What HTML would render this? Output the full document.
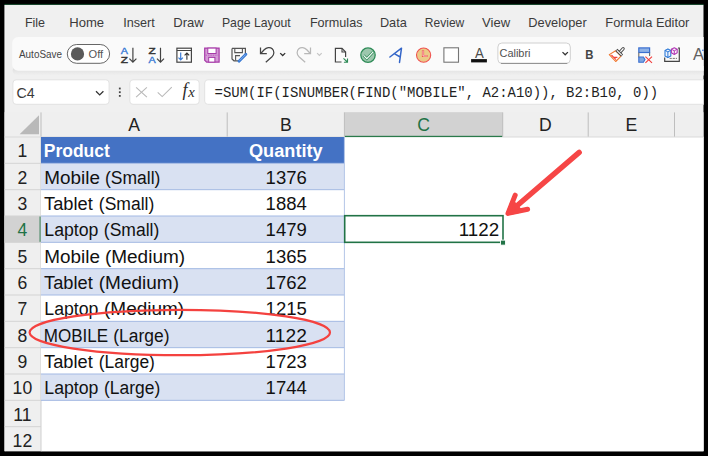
<!DOCTYPE html>
<html lang="en"><head><meta charset="utf-8"><title>Excel SUMIF case-sensitive</title>
<style>html,body{margin:0;padding:0;background:#000;overflow:hidden}svg{display:block}</style></head>
<body>
<svg width="708" height="456" viewBox="0 0 708 456" font-family="'Liberation Sans', sans-serif">
<rect width="708" height="456" fill="#000"/>
<rect x="4.4" y="3.9" width="699.3000000000001" height="1.2" fill="#0c3d22"/>
<clipPath id="c"><rect x="4.4" y="4.8" width="699.3000000000001" height="446.59999999999997"/></clipPath>
<g clip-path="url(#c)">
<rect x="4.4" y="4.8" width="699.3000000000001" height="446.59999999999997" fill="#f0f0f0"/>
<rect x="4.4" y="4.8" width="1" height="446.59999999999997" fill="#f8f8f8"/>
<g font-size="12.6" fill="#3b3b3b">
<text x="24.9" y="26.7" textLength="20.2" lengthAdjust="spacingAndGlyphs">File</text>
<text x="69.2" y="26.7" textLength="34.9" lengthAdjust="spacingAndGlyphs">Home</text>
<text x="123.2" y="26.7" textLength="31.6" lengthAdjust="spacingAndGlyphs">Insert</text>
<text x="173.2" y="26.7" textLength="30.6" lengthAdjust="spacingAndGlyphs">Draw</text>
<text x="221.9" y="26.7" textLength="68.9" lengthAdjust="spacingAndGlyphs">Page Layout</text>
<text x="309.9" y="26.7" textLength="52.6" lengthAdjust="spacingAndGlyphs">Formulas</text>
<text x="379.9" y="26.7" textLength="26.9" lengthAdjust="spacingAndGlyphs">Data</text>
<text x="424.8" y="26.7" textLength="39.5" lengthAdjust="spacingAndGlyphs">Review</text>
<text x="482.0" y="26.7" textLength="28.1" lengthAdjust="spacingAndGlyphs">View</text>
<text x="528.3" y="26.7" textLength="58.4" lengthAdjust="spacingAndGlyphs">Developer</text>
<text x="605.3" y="26.7" textLength="84.1" lengthAdjust="spacingAndGlyphs">Formula Editor</text>
</g>
<linearGradient id="sh" x1="0" y1="0" x2="0" y2="1"><stop offset="0" stop-color="#d6d6d6"/><stop offset="0.45" stop-color="#e4e4e4"/><stop offset="1" stop-color="#f0f0f0"/></linearGradient>
<rect x="12.6" y="66" width="720" height="9.4" rx="5" fill="url(#sh)"/>
<rect x="12.2" y="37.1" width="720" height="33.6" rx="6" fill="#fafafa"/>
<text x="19" y="57.6" font-size="10.6" fill="#444" textLength="43" lengthAdjust="spacingAndGlyphs">AutoSave</text>
<rect x="67.3" y="44.5" width="42.3" height="18.8" rx="9.4" fill="#fff" stroke="#555" stroke-width="0.9"/>
<circle cx="77.5" cy="53.9" r="6.6" fill="#5a5a5a"/>
<text x="88.5" y="57.6" font-size="10.6" fill="#555" textLength="14.6" lengthAdjust="spacingAndGlyphs">Off</text>
<text x="120.8" y="54.1" font-size="8.4" fill="#3a7bd5" stroke="#3a7bd5" stroke-width="0.35" textLength="7.2" lengthAdjust="spacingAndGlyphs">A</text>
<text x="120.8" y="62.6" font-size="8.4" fill="#333" stroke="#333" stroke-width="0.35" textLength="7.2" lengthAdjust="spacingAndGlyphs">Z</text>
<path d="M132.9 47.7V62M129.4 58.6L132.9 62.2L136.4 58.6" fill="none" stroke="#444" stroke-width="1.2"/>
<text x="148.4" y="54.1" font-size="8.4" fill="#333" stroke="#333" stroke-width="0.35" textLength="7.2" lengthAdjust="spacingAndGlyphs">Z</text>
<text x="148.4" y="62.6" font-size="8.4" fill="#3a7bd5" stroke="#3a7bd5" stroke-width="0.35" textLength="7.2" lengthAdjust="spacingAndGlyphs">A</text>
<path d="M160.5 47.7V62M157.0 58.6L160.5 62.2L164.0 58.6" fill="none" stroke="#444" stroke-width="1.2"/>
<rect x="176.9" y="48.2" width="14.5" height="14" fill="#fff" stroke="#444" stroke-width="1.2"/>
<path d="M176.9 50.5H191.4" stroke="#444" stroke-width="1"/>
<path d="M180.7 52.4V59.8M178.5 57.6L180.7 59.8L182.9 57.6" fill="none" stroke="#3a7bd5" stroke-width="1.2"/>
<path d="M186.9 59.8V53M184.6 55.3L186.9 53L189.2 55.3" fill="none" stroke="#333" stroke-width="1.1"/>
<path d="M204.7 48.1H219.1V62.1H206.6L204.7 60.2Z" fill="#d49ad6" stroke="#a63aa8" stroke-width="1.2"/>
<rect x="207.8" y="48.1" width="8.3" height="5.4" fill="#fff" stroke="#a63aa8" stroke-width="1"/>
<rect x="208.7" y="57.4" width="6.2" height="4.7" fill="#fff" stroke="#a63aa8" stroke-width="1"/>
<path d="M205.6 55.2H218.4" stroke="#b95cbc" stroke-width="0.9" stroke-dasharray="1.4 1"/>
<path d="M232 48.4H245.4V55M232 48.4V59L234 60.8H238" fill="none" stroke="#555" stroke-width="1.2"/>
<path d="M234.8 48.4V52.6H242.4V48.4" fill="none" stroke="#555" stroke-width="1.1"/>
<path d="M235.6 60.6V55.6H240" fill="none" stroke="#555" stroke-width="1.1"/>
<path d="M245.9 54.2L239 61.2" stroke="#3a7bd5" stroke-width="2.8" stroke-linecap="round"/>
<path d="M245.6 54.5L239.6 60.6" stroke="#9fc0ee" stroke-width="0.7"/>
<path d="M260.5 47.4V53.7H266.8" fill="none" stroke="#444" stroke-width="1.25"/>
<path d="M260.7 53.5L264.2 49.8C266.5 47.4 270 46.8 272.2 48.8C274.6 51 274.3 54.6 272 56.8L265.8 62.2" fill="none" stroke="#444" stroke-width="1.25"/>
<path d="M280.2 53.1L282.7 55.5L285.2 53.1" fill="none" stroke="#333" stroke-width="1.3"/>
<path d="M310.5 47.4V53.7H304.2" fill="none" stroke="#b8b8b8" stroke-width="1.25"/>
<path d="M310.3 53.5L306.8 49.8C304.5 47.4 301 46.8 298.8 48.8C296.4 51 296.7 54.6 299 56.8L305.2 62.2" fill="none" stroke="#b8b8b8" stroke-width="1.25"/>
<path d="M317.1 53.1L319.4 55.4L321.7 53.1" fill="none" stroke="#c6c6c6" stroke-width="1.2"/>
<path d="M341.5 62H335.4V48.4H342L345.6 52V57" fill="none" stroke="#444" stroke-width="1.2"/>
<path d="M342 48.4V52H345.6" fill="none" stroke="#444" stroke-width="1.1"/>
<path d="M343.5 58.4L347.3 62M347.5 58.6V62.2H343.9" fill="none" stroke="#2e8b57" stroke-width="1.15"/>
<circle cx="368" cy="55.1" r="7.2" fill="#9cc7ad" stroke="#2e8b57" stroke-width="1.3"/>
<path d="M363.6 55.4L366.8 58.6L373 52.2" fill="none" stroke="#2e8b57" stroke-width="2.6"/>
<path d="M363.6 55.4L366.8 58.6L373 52.2" fill="none" stroke="#fff" stroke-width="1.1"/>
<path d="M389.9 57L401.5 48.2L399.5 62.4M394.7 53.9L400.2 57" fill="none" stroke="#3566c8" stroke-width="1.5" stroke-linecap="round" stroke-linejoin="round"/>
<circle cx="423.6" cy="55.1" r="7.1" fill="#ebc987" stroke="#f0524f" stroke-width="1.1"/>
<path d="M423 50.2V56H427.5" fill="none" stroke="#f0524f" stroke-width="2.2"/>
<path d="M423 50.6V56H427.1" fill="none" stroke="#fbe9e4" stroke-width="0.8"/>
<rect x="443.9" y="47.8" width="14.6" height="14.4" fill="#fff" stroke="#767676" stroke-width="1.1"/>
<text x="474.9" y="57.6" font-size="14.2" fill="#4a4a4a" textLength="8.8" lengthAdjust="spacingAndGlyphs">A</text>
<rect x="471.1" y="59.1" width="15.8" height="3.3" fill="#111"/>
<rect x="497.9" y="43" width="72.4" height="20.4" rx="4" fill="#fff" stroke="#d0d0d0" stroke-width="1"/>
<path d="M500.9 63.4H567.3" stroke="#8c8c8c" stroke-width="1"/>
<text x="499.5" y="57.1" font-size="11.4" fill="#505050" textLength="31" lengthAdjust="spacingAndGlyphs">Calibri</text>
<path d="M562.5 52.1L565.2 54.8L567.9 52.1" fill="none" stroke="#333" stroke-width="1.3"/>
<text x="585.2" y="58.5" font-size="12.4" font-weight="bold" fill="#444" textLength="8.2" lengthAdjust="spacingAndGlyphs">B</text>
<path d="M609.3 54.6L615.6 50.8L621 56.2L615.7 61.5Z" fill="#fff" stroke="#f0762d" stroke-width="1.1" stroke-linejoin="round"/>
<path d="M611.4 55L616 59.6M613.6 57.4H617.4" fill="none" stroke="#f2443c" stroke-width="1.1"/>
<path d="M619.6 52.6L623.2 48.6" stroke="#4a4a4a" stroke-width="3.1" stroke-linecap="round"/>
<path d="M619.8 52.4L623.1 48.7" stroke="#fff" stroke-width="1.3" stroke-linecap="round"/>
<path d="M616.4 49.9L622.1 55.5" stroke="#4a4a4a" stroke-width="3"/>
<path d="M616.8 50.3L621.7 55.1" stroke="#fff" stroke-width="1.1"/>
<rect x="638.8" y="47.9" width="10.8" height="4.6" fill="#8fb2e6" stroke="#3a6fd0" stroke-width="1.2"/>
<path d="M638.8 52.5V57.4M649.6 52.5V56" fill="none" stroke="#6a6a6a" stroke-width="1.1"/>
<path d="M638.8 57H643.4L645 59.6L643.4 62.3H638.8Z" fill="#7ea6e0" stroke="#3a6fd0" stroke-width="1.1"/>
<path d="M645.4 56.6L652 62.8M652 56.6L645.4 62.8" stroke="#f23c3c" stroke-width="1.1"/>
<path d="M664.7 57.4V61.3H679.3V48H678" fill="none" stroke="#444" stroke-width="1.2"/>
<path d="M669.6 58.4H677" stroke="#666" stroke-width="0.9" stroke-dasharray="2.2 0.9"/>
<path d="M665 50.4L667.9 48.9L670.8 50.4V56L667.9 57.6L665 56Z" fill="#eef4fd" stroke="#2f7bd8" stroke-width="1.1" stroke-linejoin="round"/>
<path d="M665 50.4L667.9 51.9L670.8 50.4M667.9 51.9V57.6" fill="none" stroke="#2f7bd8" stroke-width="1"/>
<path d="M671.4 49.2L674.3 47.7L677.2 49.2V52.8L674.3 54.4L671.4 52.8Z" fill="#fbeefb" stroke="#b13ab4" stroke-width="1.1" stroke-linejoin="round"/>
<path d="M671.4 49.2L674.3 50.8L677.2 49.2M674.3 50.8V54.4" fill="none" stroke="#b13ab4" stroke-width="1"/>
<text x="693.1" y="59.7" font-size="16.4" fill="#606060">A</text>
<rect x="702.2" y="49.6" width="1.6" height="1.4" fill="#3a6fd0"/>
<rect x="12.9" y="79.8" width="96.2" height="24.5" rx="3.2" fill="#fff" stroke="#e2e2e2" stroke-width="1"/>
<text x="16.6" y="97.8" font-size="14.8" fill="#3a3a3a" textLength="18.2" lengthAdjust="spacingAndGlyphs">C4</text>
<path d="M96 91.2L99.7 94.9L103.4 91.2" fill="none" stroke="#333" stroke-width="1.3"/>
<rect x="118.9" y="87.6" width="1.8" height="1.8" fill="#444"/>
<rect x="118.9" y="91.3" width="1.8" height="1.8" fill="#444"/>
<rect x="118.9" y="95.0" width="1.8" height="1.8" fill="#444"/>
<rect x="129.8" y="79.8" width="69.4" height="24.5" rx="3.2" fill="#fff" stroke="#e2e2e2" stroke-width="1"/>
<path d="M136.1 87.3L146.9 97.2M146.9 87.3L136.1 97.2" stroke="#b9b9b9" stroke-width="1.1"/>
<path d="M157.7 92.4L162.2 96.6L171.8 87.2" fill="none" stroke="#b9b9b9" stroke-width="1.1"/>
<text y="96.7" font-style="italic" font-family="'Liberation Serif', serif" fill="#2a2a2a"><tspan x="182.6" dy="-0.9" font-size="17.8">f</tspan><tspan x="188.2" dy="0.9" font-size="14.6">x</tspan></text>
<rect x="204.7" y="79.8" width="520" height="24.5" rx="3.2" fill="#fff" stroke="#e2e2e2" stroke-width="1"/>
<text x="214.6" y="97" font-size="13.9" font-family="'Liberation Mono', monospace" fill="#1f1f1f" textLength="443.6" lengthAdjust="spacingAndGlyphs">=SUM(IF(ISNUMBER(FIND("MOBILE", A2:A10)), B2:B10, 0))</text>
<rect x="4.4" y="112.2" width="699.3000000000001" height="339.2" fill="#efefef"/>
<rect x="41.0" y="137.0" width="662.7" height="314.4" fill="#fff"/>
<path d="M39 115.3V134.2H19.6Z" fill="#b9b9b9"/>
<rect x="344.4" y="112.2" width="158.3" height="24.799999999999997" fill="#d2d2d2"/>
<rect x="344.4" y="135.8" width="158.3" height="1.3" fill="#2a7a4b"/>
<rect x="40.5" y="112.4" width="1" height="24.599999999999994" fill="#bebebe"/>
<rect x="226.7" y="112.4" width="1" height="24.599999999999994" fill="#bebebe"/>
<rect x="343.9" y="112.4" width="1" height="24.599999999999994" fill="#bebebe"/>
<rect x="502.2" y="112.4" width="1" height="24.599999999999994" fill="#bebebe"/>
<rect x="587.7" y="112.4" width="1" height="24.599999999999994" fill="#bebebe"/>
<rect x="674.0" y="112.4" width="1" height="24.599999999999994" fill="#bebebe"/>
<rect x="4.4" y="136.5" width="340.0" height="1" fill="#d9d9d9"/>
<rect x="502.7" y="136.5" width="201.00000000000006" height="1" fill="#d9d9d9"/>
<text x="134.1" y="131.3" font-size="17.6" fill="#222" text-anchor="middle">A</text>
<text x="285.8" y="131.3" font-size="17.6" fill="#222" text-anchor="middle">B</text>
<text x="423.5" y="131.3" font-size="17.6" fill="#217346" text-anchor="middle">C</text>
<text x="545.4" y="131.3" font-size="17.6" fill="#222" text-anchor="middle">D</text>
<text x="631.3" y="131.3" font-size="17.6" fill="#222" text-anchor="middle">E</text>
<rect x="4.4" y="215.999" width="36.6" height="26.333" fill="#d2d2d2"/>
<rect x="39.6" y="215.999" width="1.6" height="26.333" fill="#217346"/>
<rect x="4.4" y="162.83" width="36.6" height="1" fill="#d4d4d4"/>
<rect x="4.4" y="189.17" width="36.6" height="1" fill="#d4d4d4"/>
<rect x="4.4" y="215.50" width="36.6" height="1" fill="#d4d4d4"/>
<rect x="4.4" y="241.83" width="36.6" height="1" fill="#d4d4d4"/>
<rect x="4.4" y="268.16" width="36.6" height="1" fill="#d4d4d4"/>
<rect x="4.4" y="294.50" width="36.6" height="1" fill="#d4d4d4"/>
<rect x="4.4" y="320.83" width="36.6" height="1" fill="#d4d4d4"/>
<rect x="4.4" y="347.16" width="36.6" height="1" fill="#d4d4d4"/>
<rect x="4.4" y="373.50" width="36.6" height="1" fill="#d4d4d4"/>
<rect x="4.4" y="399.83" width="36.6" height="1" fill="#d4d4d4"/>
<rect x="4.4" y="426.16" width="36.6" height="1" fill="#d4d4d4"/>
<rect x="4.4" y="452.50" width="36.6" height="1" fill="#d4d4d4"/>
<rect x="40.5" y="137.0" width="1" height="314.4" fill="#d0d0d0"/>
<text x="22.4" y="157.20" font-size="17.6" fill="#222" text-anchor="middle">1</text>
<text x="22.4" y="183.53" font-size="17.6" fill="#222" text-anchor="middle">2</text>
<text x="22.4" y="209.87" font-size="17.6" fill="#222" text-anchor="middle">3</text>
<text x="22.4" y="236.20" font-size="17.6" fill="#217346" text-anchor="middle">4</text>
<text x="22.4" y="262.53" font-size="17.6" fill="#222" text-anchor="middle">5</text>
<text x="22.4" y="288.87" font-size="17.6" fill="#222" text-anchor="middle">6</text>
<text x="22.4" y="315.20" font-size="17.6" fill="#222" text-anchor="middle">7</text>
<text x="22.4" y="341.53" font-size="17.6" fill="#222" text-anchor="middle">8</text>
<text x="22.4" y="367.86" font-size="17.6" fill="#222" text-anchor="middle">9</text>
<text x="22.4" y="394.20" font-size="17.6" fill="#222" text-anchor="middle">10</text>
<text x="22.4" y="420.53" font-size="17.6" fill="#222" text-anchor="middle">11</text>
<text x="22.4" y="446.86" font-size="17.6" fill="#222" text-anchor="middle">12</text>
<rect x="41.0" y="137.00" width="303.4" height="26.38" fill="#4472c4"/>
<rect x="41.0" y="163.33" width="303.4" height="26.38" fill="#d9e1f2"/>
<rect x="41.0" y="189.67" width="303.4" height="26.38" fill="#fff"/>
<rect x="41.0" y="216.00" width="303.4" height="26.38" fill="#d9e1f2"/>
<rect x="41.0" y="242.33" width="303.4" height="26.38" fill="#fff"/>
<rect x="41.0" y="268.66" width="303.4" height="26.38" fill="#d9e1f2"/>
<rect x="41.0" y="295.00" width="303.4" height="26.38" fill="#fff"/>
<rect x="41.0" y="321.33" width="303.4" height="26.38" fill="#d9e1f2"/>
<rect x="41.0" y="347.66" width="303.4" height="26.38" fill="#fff"/>
<rect x="41.0" y="374.00" width="303.4" height="26.38" fill="#d9e1f2"/>
<rect x="41.0" y="162.83" width="303.4" height="1" fill="#a3b9e3"/>
<rect x="41.0" y="189.17" width="303.4" height="1" fill="#a3b9e3"/>
<rect x="41.0" y="215.50" width="303.4" height="1" fill="#a3b9e3"/>
<rect x="41.0" y="241.83" width="303.4" height="1" fill="#a3b9e3"/>
<rect x="41.0" y="268.16" width="303.4" height="1" fill="#a3b9e3"/>
<rect x="41.0" y="294.50" width="303.4" height="1" fill="#a3b9e3"/>
<rect x="41.0" y="320.83" width="303.4" height="1" fill="#a3b9e3"/>
<rect x="41.0" y="347.16" width="303.4" height="1" fill="#a3b9e3"/>
<rect x="41.0" y="373.50" width="303.4" height="1" fill="#a3b9e3"/>
<rect x="41.0" y="399.83" width="303.4" height="1" fill="#a3b9e3"/>
<rect x="343.9" y="137.0" width="1" height="263.33" fill="#b4c6e7"/>
<text x="43.8" y="157.20" font-size="17.6" font-weight="bold" fill="#fff" textLength="66" lengthAdjust="spacingAndGlyphs">Product</text>
<text x="285.8" y="157.20" font-size="17.6" font-weight="bold" fill="#fff" text-anchor="middle" textLength="73.6" lengthAdjust="spacingAndGlyphs">Quantity</text>
<text y="183.53" font-size="17.6" fill="#111"><tspan x="44.3" textLength="55.6" lengthAdjust="spacingAndGlyphs">Mobile</tspan><tspan> </tspan><tspan x="104.9" textLength="55.5" lengthAdjust="spacingAndGlyphs">(Small)</tspan></text>
<text x="286.2" y="183.53" font-size="17.6" fill="#111" text-anchor="middle" textLength="41.2" lengthAdjust="spacingAndGlyphs">1376</text>
<text y="209.87" font-size="17.6" fill="#111"><tspan x="44.1" textLength="48.7" lengthAdjust="spacingAndGlyphs">Tablet</tspan><tspan> </tspan><tspan x="98.8" textLength="55.5" lengthAdjust="spacingAndGlyphs">(Small)</tspan></text>
<text x="286.2" y="209.87" font-size="17.6" fill="#111" text-anchor="middle" textLength="41.2" lengthAdjust="spacingAndGlyphs">1884</text>
<text y="236.20" font-size="17.6" fill="#111"><tspan x="44.3" textLength="54.1" lengthAdjust="spacingAndGlyphs">Laptop</tspan><tspan> </tspan><tspan x="103.8" textLength="55.5" lengthAdjust="spacingAndGlyphs">(Small)</tspan></text>
<text x="286.2" y="236.20" font-size="17.6" fill="#111" text-anchor="middle" textLength="41.2" lengthAdjust="spacingAndGlyphs">1479</text>
<text y="262.53" font-size="17.6" fill="#111"><tspan x="44.3" textLength="55.6" lengthAdjust="spacingAndGlyphs">Mobile</tspan><tspan> </tspan><tspan x="104.9" textLength="80.2" lengthAdjust="spacingAndGlyphs">(Medium)</tspan></text>
<text x="286.2" y="262.53" font-size="17.6" fill="#111" text-anchor="middle" textLength="41.2" lengthAdjust="spacingAndGlyphs">1365</text>
<text y="288.87" font-size="17.6" fill="#111"><tspan x="44.1" textLength="48.7" lengthAdjust="spacingAndGlyphs">Tablet</tspan><tspan> </tspan><tspan x="98.8" textLength="80.2" lengthAdjust="spacingAndGlyphs">(Medium)</tspan></text>
<text x="286.2" y="288.87" font-size="17.6" fill="#111" text-anchor="middle" textLength="41.2" lengthAdjust="spacingAndGlyphs">1762</text>
<text y="315.20" font-size="17.6" fill="#111"><tspan x="44.3" textLength="54.1" lengthAdjust="spacingAndGlyphs">Laptop</tspan><tspan> </tspan><tspan x="104.0" textLength="80.2" lengthAdjust="spacingAndGlyphs">(Medium)</tspan></text>
<text x="286.2" y="315.20" font-size="17.6" fill="#111" text-anchor="middle" textLength="41.2" lengthAdjust="spacingAndGlyphs">1215</text>
<text y="341.53" font-size="17.6" fill="#111"><tspan x="43.8" textLength="64.4" lengthAdjust="spacingAndGlyphs">MOBILE</tspan><tspan> </tspan><tspan x="113.3" textLength="56.2" lengthAdjust="spacingAndGlyphs">(Large)</tspan></text>
<text x="286.2" y="341.53" font-size="17.6" fill="#111" text-anchor="middle" textLength="41.2" lengthAdjust="spacingAndGlyphs">1122</text>
<text y="367.86" font-size="17.6" fill="#111"><tspan x="44.1" textLength="48.7" lengthAdjust="spacingAndGlyphs">Tablet</tspan><tspan> </tspan><tspan x="98.7" textLength="56.2" lengthAdjust="spacingAndGlyphs">(Large)</tspan></text>
<text x="286.2" y="367.86" font-size="17.6" fill="#111" text-anchor="middle" textLength="41.2" lengthAdjust="spacingAndGlyphs">1723</text>
<text y="394.20" font-size="17.6" fill="#111"><tspan x="44.3" textLength="54.1" lengthAdjust="spacingAndGlyphs">Laptop</tspan><tspan> </tspan><tspan x="104.0" textLength="56.2" lengthAdjust="spacingAndGlyphs">(Large)</tspan></text>
<text x="286.2" y="394.20" font-size="17.6" fill="#111" text-anchor="middle" textLength="41.2" lengthAdjust="spacingAndGlyphs">1744</text>
<rect x="344.7" y="215.70" width="158.3" height="26.63" fill="#fff" stroke="#217346" stroke-width="1.6"/>
<rect x="500.5" y="240.13" width="5" height="5" fill="#217346" stroke="#fff" stroke-width="0.9"/>
<text x="499.2" y="236.20" font-size="17.6" fill="#111" text-anchor="end" textLength="40.4" lengthAdjust="spacingAndGlyphs">1122</text>
<ellipse cx="179.8" cy="332.5" rx="150.2" ry="22.7" fill="none" stroke="#f4423f" stroke-width="2.2"/>
<path d="M579.2 152.4L510 211.8" stroke="#f64646" stroke-width="5.4" stroke-linecap="round"/>
<path d="M515.2 195.2L508 213.4L527.6 209.3" fill="none" stroke="#f64646" stroke-width="5" stroke-linecap="round" stroke-linejoin="round"/>
<path d="M512.6 202L508 213.4L520.4 210.8Z" fill="#f64646" stroke="#f64646" stroke-width="4" stroke-linejoin="round"/>
</g>
</svg>
</body></html>
